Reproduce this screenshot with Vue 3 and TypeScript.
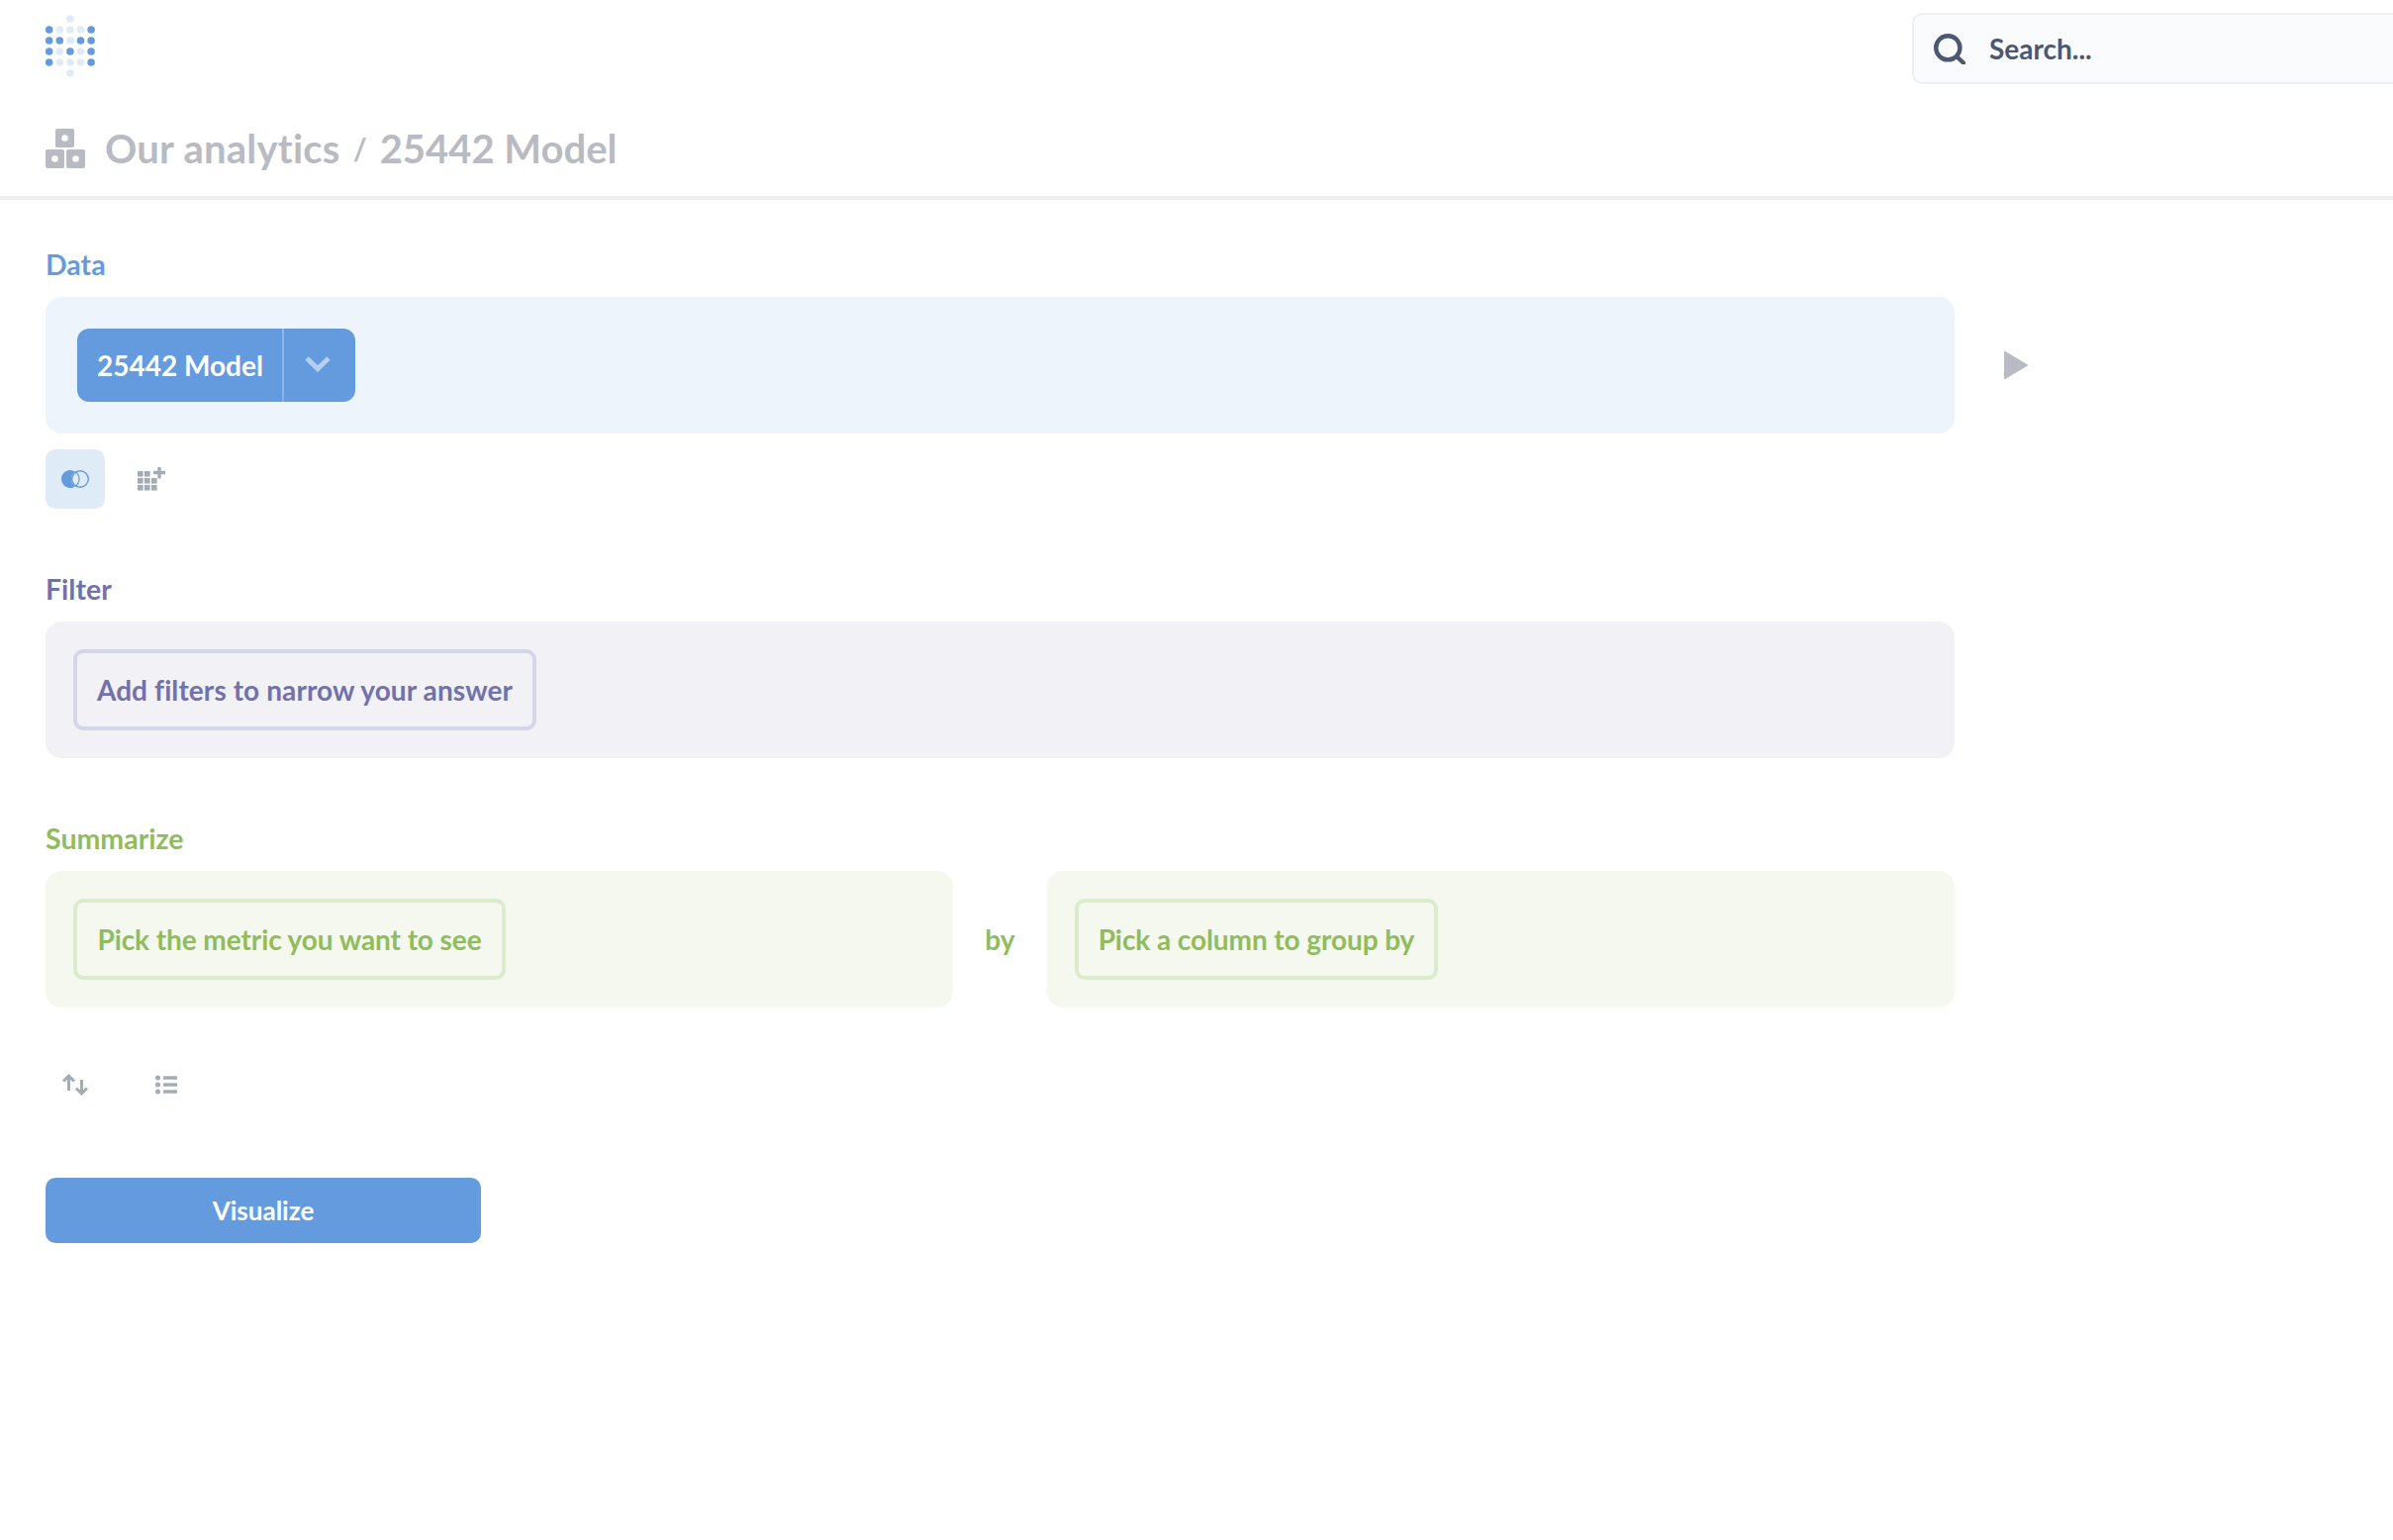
<script setup lang="ts">
const dots: [number, number, boolean][] = [
  [2, -1, false],
  [0, 0, true], [1, 0, false], [2, 0, false], [3, 0, false], [4, 0, true],
  [0, 1, true], [1, 1, true], [2, 1, false], [3, 1, true], [4, 1, true],
  [0, 2, true], [1, 2, false], [2, 2, true], [3, 2, false], [4, 2, true],
  [0, 3, true], [1, 3, false], [2, 3, false], [3, 3, false], [4, 3, true],
  [2, 4, false],
]
const grid: [number, number][] = [
  [0, 0], [7, 0], [0, 7], [7, 7], [14, 7], [0, 14], [7, 14], [14, 14],
]
</script>

<template>
  <div class="page">
    <header class="top">
      <svg class="logo" width="52" height="66" viewBox="0 0 52 66">
        <circle
          v-for="(d, i) in dots"
          :key="i"
          :cx="4.700 + d[0] * 10.600"
          :cy="17 + d[1] * 11"
          r="3.800"
          :fill="d[2] ? '#649bdf' : '#e0ebf8'"
        />
      </svg>
      <div class="search">
        <svg class="search-icon" width="32" height="31" viewBox="0 0 32 31" fill="none" stroke="#4c5773" stroke-width="4.400" stroke-linecap="round">
          <circle cx="14.300" cy="14.300" r="12.100" />
          <path d="M24 24l6 5.500" />
        </svg>
        <span>Search...</span>
      </div>
    </header>
    <div class="crumbs">
      <svg width="40" height="40" viewBox="0 0 40 40" class="crumb-icon">
        <path fill-rule="evenodd" fill="#b8bbc3" d="M10 2a2 2 0 0 1 2-2h15a2 2 0 0 1 2 2v15a2 2 0 0 1-2 2H12a2 2 0 0 1-2-2zM19.500 6.200a3.300 3.300 0 1 0 0 6.600 3.300 3.300 0 0 0 0-6.600zM0 23a2 2 0 0 1 2-2h15a2 2 0 0 1 2 2v15a2 2 0 0 1-2 2H2a2 2 0 0 1-2-2zM9.500 27.200a3.300 3.300 0 1 0 0 6.600 3.300 3.300 0 0 0 0-6.600zM21 23a2 2 0 0 1 2-2h15a2 2 0 0 1 2 2v15a2 2 0 0 1-2 2H23a2 2 0 0 1-2-2zM30.500 27.200a3.300 3.300 0 1 0 0 6.600 3.300 3.300 0 0 0 0-6.600z" />
      </svg>
      <span class="crumb crumb-first">Our analytics</span>
      <span class="slash">/</span>
      <span class="crumb">25442 Model</span>
    </div>

    <main class="content">
      <section class="sec-data">
        <h2 class="label blue">Data</h2>
        <div class="row">
          <div class="panel panel-blue">
            <div class="pill">
              <span class="pill-text">25442 Model</span>
              <span class="pill-arrow">
                <svg width="26" height="16" viewBox="0 0 26 16" fill="none" stroke="#b4cff0" stroke-width="5">
                  <path d="M2 2l11 10.500L24 2" />
                </svg>
              </span>
            </div>
          </div>
          <svg class="play" width="24" height="28" viewBox="0 0 24 28">
            <path fill="#b8bbc3" stroke="#b8bbc3" stroke-width="2" stroke-linejoin="round" d="M1 1l22 13L1 27z" />
          </svg>
        </div>
        <div class="tools">
          <span class="tool tool-on">
            <svg width="28" height="20" viewBox="0 0 28 20">
              <path fill="#649bdf" d="M14 2.520A9 9 0 1 0 14 17.480 9 9 0 0 1 14 2.520z" />
              <circle cx="19" cy="10" r="8.300" fill="none" stroke="#649bdf" stroke-width="1.400" />
              <path d="M14 2.520A9 9 0 0 1 14 17.480" fill="none" stroke="#649bdf" stroke-width="1.200" />
            </svg>
          </span>
          <span class="tool tool-grid">
            <svg width="28" height="24" viewBox="0 0 28 24">
              <rect v-for="(g, i) in grid" :key="i" :x="g[0]" :y="g[1] + 4" width="5.600" height="5.600" fill="#a3abb3" />
              <path d="M22 0v11.500M16 5.500h12" stroke="#a3abb3" stroke-width="3.300" />
            </svg>
          </span>
        </div>
      </section>

      <section class="sec-filter">
        <h2 class="label purple">Filter</h2>
        <div class="panel panel-purple">
          <button class="ghost ghost-purple filter-btn">Add filters to narrow your answer</button>
        </div>
      </section>

      <section class="sec-summarize">
        <h2 class="label green">Summarize</h2>
        <div class="sum-row">
          <div class="panel panel-green">
            <button class="ghost ghost-green metric-btn">Pick the metric you want to see</button>
          </div>
          <span class="by">by</span>
          <div class="panel panel-green">
            <button class="ghost ghost-green column-btn">Pick a column to group by</button>
          </div>
        </div>
      </section>

      <div class="tools2">
        <svg width="26" height="22" viewBox="0 0 26 22" fill="none" stroke="#a3abb3" stroke-width="3">
          <path d="M6.500 17V2M1 7.500l5.500-5.500 5.500 5.500" />
          <path d="M19.500 6v14M14 14.500l5.500 5.500 5.500-5.500" />
        </svg>
        <svg width="22" height="20" viewBox="0 0 22 20" fill="#a3abb3">
          <circle cx="2.500" cy="3" r="2.500" />
          <circle cx="2.500" cy="10" r="2.500" />
          <circle cx="2.500" cy="17" r="2.500" />
          <rect x="8" y="1.300" width="14" height="3.400" />
          <rect x="8" y="8.300" width="14" height="3.400" />
          <rect x="8" y="15.300" width="14" height="3.400" />
        </svg>
      </div>

      <button class="visualize">Visualize</button>
    </main>
  </div>
</template>

<style scoped>
.page {
  width: 2418px;
  height: 1556px;
  overflow: hidden;
  background: #fff;
  font-family: Lato, "Open Sans", sans-serif;
  box-sizing: border-box;
}
.top {
  height: 112px;
  display: flex;
  justify-content: space-between;
  align-items: flex-start;
  padding-left: 45px;
  box-sizing: border-box;
}
.logo {
  margin-top: 13px;
}
.search {
  width: 486px;
  height: 72px;
  margin-top: 13px;
  box-sizing: border-box;
  border: 2px solid #eeeff1;
  border-right: 0;
  border-radius: 10px 0 0 10px;
  background: #f9fbfc;
  display: flex;
  align-items: center;
  padding-left: 20px;
  gap: 24px;
  color: #4c5773;
  font-size: 28px;
  font-weight: 700;
}
.search-icon {
  flex: none;
}
.crumbs {
  height: 90px;
  box-sizing: border-box;
  border-bottom: 4px solid #eeecec;
  display: flex;
  align-items: flex-start;
  padding-left: 46px;
  color: #b8bbc3;
}
.crumb-icon {
  margin-top: 18px;
  margin-right: 20px;
}
.crumb {
  font-size: 40px;
  font-weight: 700;
  line-height: 52px;
  margin-top: 12px;
}
.crumb-first {
  letter-spacing: 0.24px;
}
.slash {
  font-size: 30px;
  font-weight: 700;
  line-height: 52px;
  margin: 12px 13px 0;
}
.content {
  padding: 0 0 0 46px;
}
.label {
  margin: 0;
  font-size: 28.500px;
  line-height: 32px;
  font-weight: 700;
}
.blue { color: #649bdf; }
.purple { color: #7172ad; }
.green { color: #90bd5c; }
.sec-data { padding-top: 49px; }
.row {
  display: flex;
  align-items: center;
  margin-top: 17px;
}
.panel {
  box-sizing: border-box;
  display: flex;
  align-items: center;
  border-radius: 16px;
  height: 138px;
}
.panel-blue {
  width: 1929px;
  background: #edf4fc;
  padding-left: 32px;
}
.panel-purple {
  width: 1929px;
  background: #f1f1f6;
  padding-left: 28px;
}
.panel-green {
  width: 917px;
  background: #f4f8ef;
  padding-left: 28px;
}
.play {
  margin-left: 50px;
}
.pill {
  height: 74px;
  width: 281px;
  display: flex;
  border-radius: 12px;
  background: #649bdf;
  color: #fff;
}
.pill-text {
  width: 209px;
  box-sizing: border-box;
  padding-left: 20px;
  font-size: 28px;
  font-weight: 700;
  line-height: 74px;
  border-right: 2px solid #8cb5e8;
}
.pill-arrow {
  flex: 1;
  display: flex;
  align-items: center;
  justify-content: center;
  padding: 0 4px 3px 0;
}
.tools {
  display: flex;
  margin-top: 16px;
  gap: 15px;
}
.tool {
  width: 60px;
  height: 60px;
  display: flex;
  align-items: center;
  justify-content: center;
  border-radius: 10px;
}
.tool-on {
  background: #e0ebf8;
}
.tool-grid {
  box-sizing: border-box;
  padding-left: 3px;
}
.sec-filter { padding-top: 65px; }
.sec-filter .panel { margin-top: 17px; }
.ghost {
  box-sizing: border-box;
  height: 82px;
  padding: 0;
  border-radius: 10px;
  background: transparent;
  font-family: inherit;
  font-size: 28px;
  font-weight: 700;
}
.filter-btn { width: 468px; letter-spacing: 0.1px; }
.metric-btn { width: 437px; letter-spacing: -0.08px; }
.column-btn { width: 367px; letter-spacing: -0.08px; }
.ghost-purple {
  border: 4px solid #d4d5e6;
  color: #7172ad;
}
.ghost-green {
  border: 4px solid #dcebcb;
  color: #90bd5c;
}
.sec-summarize { padding-top: 65px; }
.sum-row {
  width: 1929px;
  margin-top: 17px;
  display: flex;
  align-items: center;
  justify-content: space-between;
}
.by {
  color: #90bd5c;
  font-size: 28px;
  font-weight: 700;
}
.tools2 {
  display: flex;
  align-items: center;
  gap: 68px;
  margin: 67px 0 0 17px;
}
.visualize {
  display: block;
  width: 440px;
  height: 66px;
  margin-top: 83px;
  border: 0;
  border-radius: 10px;
  background: #649bdf;
  color: #fff;
  font-family: inherit;
  font-size: 26px;
  font-weight: 700;
}
</style>
